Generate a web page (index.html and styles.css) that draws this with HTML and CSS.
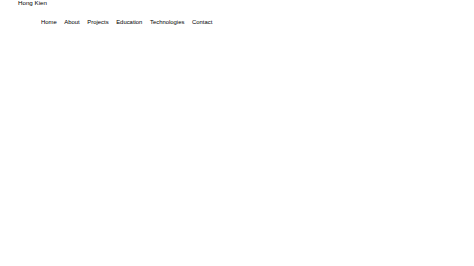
FILE: index.html
```html
<!DOCTYPE html>
<html>
<head>
<meta charset="utf-8">
<link rel="stylesheet" href="styles.css">
</head>
<body>
<header class="site-header">
  <div class="brand">Hong Kien</div>
  <nav class="nav">
    <ul class="nav-list">
      <li class="nav-item">Home</li>
      <li class="nav-item">About</li>
      <li class="nav-item">Projects</li>
      <li class="nav-item">Education</li>
      <li class="nav-item">Technologies</li>
      <li class="nav-item">Contact</li>
    </ul>
  </nav>
</header>
</body>
</html>
```
FILE: styles.css
```css
html, body {
  margin: 0;
  padding: 0;
  background: #fff;
}
body {
  font-family: "Liberation Sans", Arial, sans-serif;
  color: #000;
  line-height: 1;
}
.brand {
  font-size: 6.2px;
  padding-left: 18px;
}
.nav {
  margin-top: 14px;
}
.nav-list {
  list-style: none;
  margin: 0;
  padding: 0 0 0 41px;
  display: flex;
  gap: 7.6px;
  font-size: 5.9px;
}
```
